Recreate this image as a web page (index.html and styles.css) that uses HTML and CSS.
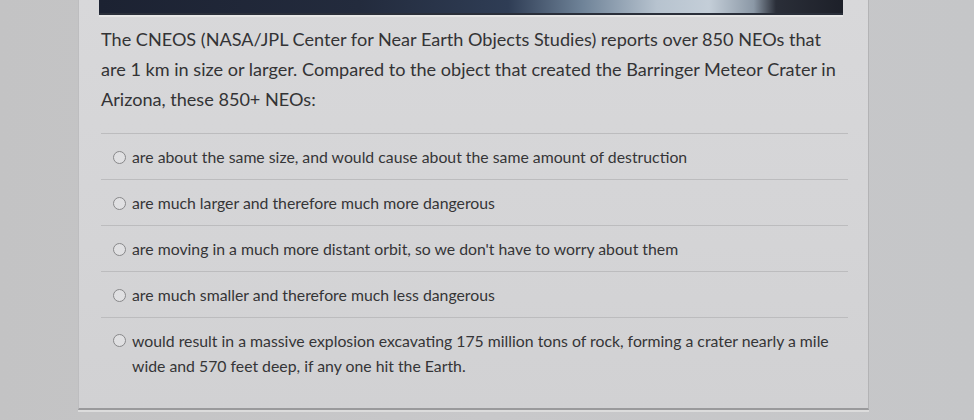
FILE: index.html
```html
<!DOCTYPE html>
<html lang="en">
<head>
<meta charset="utf-8">
<title>Question</title>
<link rel="stylesheet" href="styles.css">
</head>
<body>
<div class="card">
  <div class="banner"></div>
  <p class="question">The CNEOS (NASA/JPL Center for Near Earth Objects Studies) reports over 850 NEOs that are 1 km in size or larger. Compared to the object that created the Barringer Meteor Crater in Arizona, these 850+ NEOs:</p>
  <ul class="options">
    <li class="option"><span class="radio"></span><span class="label">are about the same size, and would cause about the same amount of destruction</span></li>
    <li class="option"><span class="radio"></span><span class="label">are much larger and therefore much more dangerous</span></li>
    <li class="option"><span class="radio"></span><span class="label">are moving in a much more distant orbit, so we don't have to worry about them</span></li>
    <li class="option"><span class="radio"></span><span class="label">are much smaller and therefore much less dangerous</span></li>
    <li class="option multi"><span class="radio"></span><span class="label">would result in a massive explosion excavating 175 million tons of rock, forming a crater nearly a mile wide and 570 feet deep, if any one hit the Earth.</span></li>
  </ul>
</div>
</body>
</html>
```
FILE: styles.css
```css
html, body {
  margin: 0;
  padding: 0;
  height: 100%;
  overflow: hidden;
}
body {
  background: linear-gradient(90deg, #c3c3c4 0%, #c8c8ca 50%, #c5c6c8 100%);
  font-family: Lato, "Open Sans", sans-serif;
  color: #363638;
}
.card {
  margin-left: 78px;
  width: 791px;
  height: 410px;
  box-sizing: border-box;
  background: linear-gradient(180deg, #d8d8da 0%, #d4d4d6 60%, #d1d1d3 100%);
  border-left: 1px solid #bdbdbf;
  border-right: 1px solid #b3b3b5;
  border-bottom: 2px solid #9a9a9c;
  padding: 0 26px 0 20px;
  box-shadow: 0 2px 0 #dcdcdc;
}
.banner {
  height: 13px;
  width: 744px;
  background: linear-gradient(90deg, #1c2232 0%, #232b3d 35%, #2f3d55 55%, #6f8398 65%, #b7c3cf 75%, #c4ced8 82%, #8b98a6 88%, #2a2e38 91%, #1d2029 100%);
  border-bottom: 2px solid #2a2f3a;
  box-shadow: 0 2px 0 #e6e6e6;
}
.question {
  margin: 9px 0 0 2px;
  font-size: 18.1px;
  line-height: 30px;
  width: 748px;
  color: #333335;
}
.options {
  list-style: none;
  margin: 19px 0 0 2px;
  padding: 0;
  width: 747px;
}
.option {
  display: flex;
  align-items: flex-start;
  border-top: 1px solid #bcbcbe;
  padding: 12px 0 0 12px;
  height: 33px;
  font-size: 15.8px;
  line-height: 22px;
}
.option.multi {
  height: auto;
  padding-top: 10px;
  line-height: 25px;
}
.option.multi .radio {
  margin-top: 6px;
}
.radio {
  flex: none;
  width: 13px;
  height: 13px;
  border: 1.5px solid #88888a;
  border-radius: 50%;
  background: #e0e0e2;
  margin: 5px 6px 0 0;
  box-sizing: border-box;
}
.label {
  max-width: 725px;
  color: #353537;
}
```
